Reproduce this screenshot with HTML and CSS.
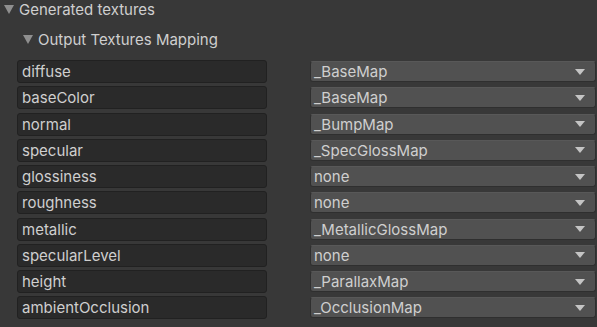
FILE: index.html
```html
<!DOCTYPE html>
<html>
<head>
<meta charset="utf-8">
<link rel="stylesheet" href="styles.css">
</head>
<body>
<div class="panel">
  <div class="foldout level1">
    <span class="tri"></span>
    <span class="label">Generated textures</span>
  </div>
  <div class="foldout level2">
    <span class="tri"></span>
    <span class="label">Output Textures Mapping</span>
  </div>
  <div class="grid">
    <div class="field">diffuse</div><div class="drop"><span>_BaseMap</span><i class="arrow"></i></div>
    <div class="field">baseColor</div><div class="drop"><span>_BaseMap</span><i class="arrow"></i></div>
    <div class="field">normal</div><div class="drop"><span>_BumpMap</span><i class="arrow"></i></div>
    <div class="field">specular</div><div class="drop"><span>_SpecGlossMap</span><i class="arrow"></i></div>
    <div class="field">glossiness</div><div class="drop"><span>none</span><i class="arrow"></i></div>
    <div class="field">roughness</div><div class="drop"><span>none</span><i class="arrow"></i></div>
    <div class="field">metallic</div><div class="drop"><span>_MetallicGlossMap</span><i class="arrow"></i></div>
    <div class="field">specularLevel</div><div class="drop"><span>none</span><i class="arrow"></i></div>
    <div class="field">height</div><div class="drop"><span>_ParallaxMap</span><i class="arrow"></i></div>
    <div class="field">ambientOcclusion</div><div class="drop"><span>_OcclusionMap</span><i class="arrow"></i></div>
  </div>
</div>
</body>
</html>
```

FILE: styles.css
```css
html, body {
  margin: 0;
  padding: 0;
  background: #383838;
}
.panel {
  width: 597px;
  height: 327px;
  overflow: hidden;
  font-family: Inter, "Noto Sans", sans-serif;
  font-size: 15px;
  color: #cfcfcf;
}
.foldout {
  display: flex;
  align-items: center;
  height: 18px;
}
.level1 {
  padding-left: 4px;
}
.level2 {
  margin-top: 12px;
  padding-left: 23px;
}
.tri {
  width: 0;
  height: 0;
  border-left: 5px solid transparent;
  border-right: 5px solid transparent;
  border-top: 9px solid #8f8f8f;
  margin-right: 5px;
  margin-top: 1px;
}
.grid {
  display: grid;
  grid-template-columns: 250px 286px;
  grid-auto-rows: 23px;
  column-gap: 43px;
  row-gap: 3.25px;
  padding-left: 17px;
  margin-top: 12px;
}
.field {
  box-sizing: border-box;
  background: #2a2a2a;
  border: 1px solid #212121;
  border-radius: 3px;
  padding-left: 4px;
  line-height: 21px;
  white-space: nowrap;
}
.drop {
  box-sizing: border-box;
  align-self: start;
  margin-top: 1px;
  height: 21px;
  background: #515151;
  border: 1px solid #2f2f2f;
  border-top-color: #585858;
  border-radius: 3px;
  padding-left: 3px;
  padding-right: 10px;
  display: flex;
  align-items: center;
  justify-content: space-between;
  white-space: nowrap;
  line-height: 19px;
}
.arrow {
  width: 0;
  height: 0;
  border-left: 5px solid transparent;
  border-right: 5px solid transparent;
  border-top: 6px solid #c4c4c4;
}
```
